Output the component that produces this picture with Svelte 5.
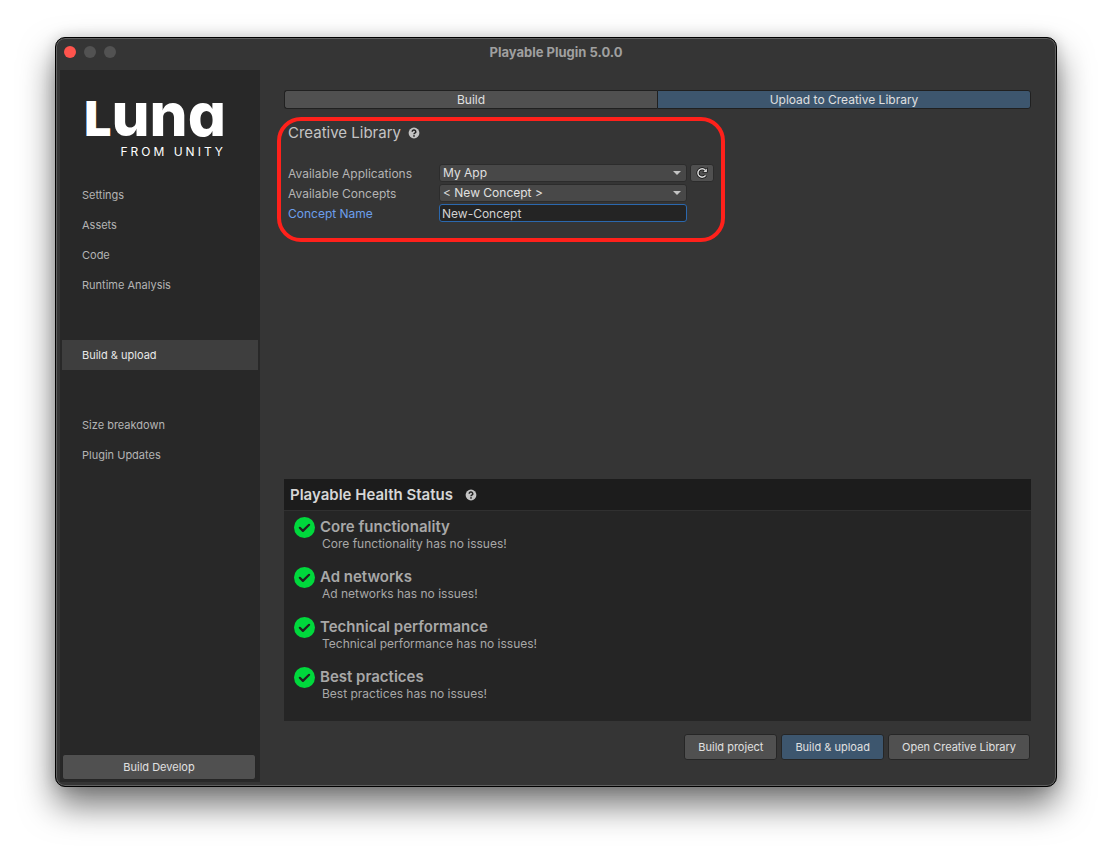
<script lang="ts">
  interface Check {
    title: string;
    message: string;
  }

  const navGroups: string[][] = [
    ['Settings', 'Assets', 'Code', 'Runtime Analysis'],
    ['Build & upload'],
    ['Size breakdown', 'Plugin Updates'],
  ];

  const tabs = ['Build', 'Upload to Creative Library'];

  const checks: Check[] = [
    { title: 'Core functionality', message: 'Core functionality has no issues!' },
    { title: 'Ad networks', message: 'Ad networks has no issues!' },
    { title: 'Technical performance', message: 'Technical performance has no issues!' },
    { title: 'Best practices', message: 'Best practices has no issues!' },
  ];

  let activePage = $state('Build & upload');
  let activeTab = $state('Upload to Creative Library');
  let application = $state('My App');
  let concept = $state('< New Concept >');
  let conceptName = $state('New-Concept');
</script>

{#snippet helpIcon()}
  <svg class="help-icon" viewBox="0 0 12 12" aria-hidden="true">
    <circle cx="6" cy="6" r="5.4" fill="#c4c4c4" />
    <path d="M4.2 4.7a1.8 1.6 0 1 1 2.6 1.4q-.8.4-.8 1.1" fill="none" stroke="#222" stroke-width="1.5" />
    <rect x="5.2" y="8.2" width="1.6" height="1.5" fill="#222" />
  </svg>
{/snippet}

{#snippet arrow()}
  <svg class="arrow" viewBox="0 0 8 4" aria-hidden="true">
    <path d="M0 0h8L4 4z" fill="#c4c4c4" />
  </svg>
{/snippet}

<div class="desktop">
  <div class="window">
    <header class="titlebar">
      <div class="lights">
        <button type="button" class="light close" aria-label="Close"></button>
        <button type="button" class="light" aria-label="Minimize"></button>
        <button type="button" class="light" aria-label="Zoom"></button>
      </div>
      <h1 class="window-title">Playable Plugin 5.0.0</h1>
    </header>

    <div class="body">
      <aside class="sidebar">
        <div class="logo">
          <div class="wordmark"><span class="small-cap">L</span>una</div>
          <div class="tagline">FROM UNITY</div>
        </div>

        <nav class="nav">
          {#each navGroups as group}
            <div class="nav-group">
              {#each group as page}
                <button
                  type="button"
                  class="nav-item"
                  class:active={page === activePage}
                  onclick={() => (activePage = page)}
                >{page}</button>
              {/each}
            </div>
          {/each}
        </nav>

        <button type="button" class="btn develop">Build Develop</button>
      </aside>

      <main class="main">
        <div class="tabs">
          {#each tabs as tab}
            <button
              type="button"
              class="tab"
              class:active={tab === activeTab}
              onclick={() => (activeTab = tab)}
            >{tab}</button>
          {/each}
        </div>

        <section class="library">
          <h2 class="library-title">Creative Library {@render helpIcon()}</h2>

          <div class="row">
            <label for="application">Available Applications</label>
            <div class="select">
              <select id="application" bind:value={application}>
                <option>My App</option>
              </select>
              {@render arrow()}
            </div>
            <button type="button" class="refresh" aria-label="Refresh">
              <svg viewBox="0 0 12 12" aria-hidden="true">
                <path d="M9.3 3.2A4.2 4.2 0 1 0 9.6 8.3" fill="none" stroke="#111" stroke-width="3" />
                <path d="M11.6.2v5.4H6.2z" fill="#111" />
                <path d="M9.3 3.2A4.2 4.2 0 1 0 9.6 8.3" fill="none" stroke="#ddd" stroke-width="1.5" />
                <path d="M10.9 1.5v3.5H7.3z" fill="#ddd" />
              </svg>
            </button>
          </div>

          <div class="row">
            <label for="concept">Available Concepts</label>
            <div class="select">
              <select id="concept" bind:value={concept}>
                <option>&lt; New Concept &gt;</option>
              </select>
              {@render arrow()}
            </div>
          </div>

          <div class="row">
            <label for="concept-name" class="focused">Concept Name</label>
            <input id="concept-name" type="text" bind:value={conceptName} spellcheck="false" />
          </div>
        </section>

        <section class="health">
          <h2 class="health-title">Playable Health Status {@render helpIcon()}</h2>
          <ul class="checks">
            {#each checks as check}
              <li class="check">
                <svg class="check-icon" viewBox="0 0 21 21" aria-hidden="true">
                  <circle cx="10.5" cy="10.5" r="10.5" fill="#00d83c" />
                  <path
                    d="M5.8 10.8l3.1 3.1 6.2-6.1"
                    fill="none"
                    stroke="#202020"
                    stroke-width="2.2"
                    stroke-linecap="round"
                    stroke-linejoin="round"
                  />
                </svg>
                <div>
                  <h3>{check.title}</h3>
                  <p>{check.message}</p>
                </div>
              </li>
            {/each}
          </ul>
        </section>

        <footer class="actions">
          <button type="button" class="btn">Build project</button>
          <button type="button" class="btn primary">Build &amp; upload</button>
          <button type="button" class="btn">Open Creative Library</button>
        </footer>
      </main>
    </div>
  </div>
</div>

<style>
  :global(body) {
    background: #fff;
  }

  .desktop {
    box-sizing: border-box;
    min-height: 100vh;
    padding: 37px 55px 73px;
    display: flex;
    overflow: hidden;
    font-family: Inter, "Liberation Sans", sans-serif;
    font-size: 12px;
    line-height: 16px;
    color: #c4c4c4;
  }

  .window {
    flex: 1;
    display: flex;
    flex-direction: column;
    background: #353535;
    border: 1px solid #000;
    border-radius: 10px;
    box-shadow:
      inset 0 0 0 1px #606060,
      0 18px 34px rgba(0, 0, 0, 0.55),
      0 0 14px rgba(0, 0, 0, 0.15);
  }

  h1,
  h2,
  h3,
  p,
  ul {
    margin: 0;
    padding: 0;
  }

  button,
  select,
  input {
    box-sizing: border-box;
    margin: 0;
    font: inherit;
    color: #e0e0e0;
    outline: none;
  }

  .titlebar {
    height: 32px;
    padding: 0 8px;
    display: grid;
    grid-template-columns: 1fr auto 1fr;
    align-items: center;
  }

  .lights {
    display: flex;
    gap: 8px;
    padding-bottom: 4px;
  }

  .light {
    width: 12px;
    height: 12px;
    padding: 0;
    border: none;
    border-radius: 50%;
    background: #525252;
  }

  .light.close {
    background: #ff544d;
  }

  .window-title {
    padding-bottom: 5px;
    font-size: 13px;
    font-weight: 700;
    color: #a0a0a0;
  }

  .body {
    flex: 1;
    display: flex;
    padding: 0 4px 4px;
  }

  .sidebar {
    box-sizing: border-box;
    width: 200px;
    padding: 0 2px;
    display: flex;
    flex-direction: column;
    background: #282828;
    font-size: 11px;
  }

  .logo {
    box-sizing: border-box;
    height: 110px;
    padding: 16px 32px 0 20px;
    color: #fff;
    text-align: right;
  }

  .wordmark {
    height: 58px;
    font-size: 60px;
    line-height: 56px;
    font-weight: 800;
    font-optical-sizing: none;
    font-feature-settings: "cv11";
    white-space: nowrap;
  }

  .small-cap {
    font-size: 48px;
    font-weight: 900;
  }

  .tagline {
    font-size: 12px;
    font-weight: 400;
    letter-spacing: 3px;
  }

  .nav {
    display: flex;
    flex-direction: column;
    gap: 40px;
  }

  .nav-group {
    display: flex;
    flex-direction: column;
  }

  .nav-item {
    height: 30px;
    padding: 0 20px;
    border: none;
    background: none;
    color: #b4b4b4;
    text-align: left;
  }

  .nav-item.active {
    background: #3e3e3e;
    color: #e8e8e8;
  }

  .btn {
    height: 26px;
    padding: 0 13px;
    border: 1px solid #262626;
    border-radius: 3px;
    background: #505050;
    font-size: 11px;
  }

  .btn.primary,
  .tab.active {
    background: #3d566e;
  }

  .btn.develop {
    margin: auto 2px 2px 0;
  }

  .main {
    flex: 1;
    display: flex;
    flex-direction: column;
    padding: 20px 21px 22px 24px;
  }

  .tabs {
    display: flex;
  }

  .tab {
    flex: 1;
    height: 19px;
    padding: 0;
    border: 1px solid #202020;
    background: #505050;
    line-height: 17px;
  }

  .tab:first-child {
    border-right: none;
    border-radius: 3px 0 0 3px;
  }

  .tab:last-child {
    border-radius: 0 3px 3px 0;
  }

  .library {
    align-self: flex-start;
    box-sizing: border-box;
    margin: 8px 0 24px -7px;
    padding: 2px 7px 16px;
    display: flex;
    flex-direction: column;
    gap: 2px;
    border: 4px solid #ff211b;
    border-radius: 24px;
  }

  .library-title {
    display: flex;
    align-items: center;
    gap: 7px;
    margin-bottom: 19px;
    font-size: 15px;
    line-height: 20px;
    font-weight: 400;
  }

  .help-icon {
    width: 12px;
    height: 12px;
  }

  .row {
    display: flex;
    align-items: center;
    height: 18px;
  }

  .row label {
    width: 151px;
    padding-top: 2px;
    color: #b4b4b4;
  }

  .row label.focused {
    color: #6c9fec;
  }

  .select {
    position: relative;
    width: 248px;
    height: 18px;
  }

  select {
    display: block;
    appearance: none;
    width: 100%;
    height: 18px;
    padding: 0 20px 0 3px;
    border: 1px solid #2c2c2c;
    border-radius: 3px;
    background: #484848;
  }

  .arrow {
    position: absolute;
    top: 7px;
    right: 6px;
    width: 8px;
    height: 4px;
    pointer-events: none;
  }

  .row input {
    width: 248px;
    height: 18px;
    padding: 0 2px;
    border: 1px solid #2b68ae;
    border-radius: 3px;
    background: #242424;
    color: #d2d2d2;
  }

  .refresh {
    display: grid;
    place-items: center;
    width: 24px;
    height: 18px;
    margin-left: 3px;
    padding: 0;
    border: 1px solid #2c2c2c;
    border-radius: 3px;
    background: #505050;
  }

  .refresh svg {
    width: 12px;
    height: 12px;
  }

  .health {
    margin-top: auto;
    background: #252525;
  }

  .health-title {
    display: flex;
    align-items: center;
    gap: 12px;
    height: 31px;
    padding: 0 6px;
    border-bottom: 1px solid #303030;
    background: #1c1c1c;
    font-size: 15px;
    font-weight: 600;
    color: #d6d6d6;
  }

  .checks {
    display: flex;
    flex-direction: column;
    gap: 16px;
    padding: 6px 10px 20px;
    list-style: none;
  }

  .check {
    display: flex;
    gap: 5px;
  }

  .check-icon {
    width: 21px;
    height: 21px;
  }

  .check h3 {
    font-size: 15px;
    line-height: 20px;
    font-weight: 600;
    color: #a8a8a8;
  }

  .check p {
    padding-left: 2px;
    line-height: 14px;
    color: #a8a8a8;
  }

  .actions {
    display: flex;
    justify-content: flex-end;
    gap: 4px;
    padding: 13px 1px 0 0;
  }
</style>
